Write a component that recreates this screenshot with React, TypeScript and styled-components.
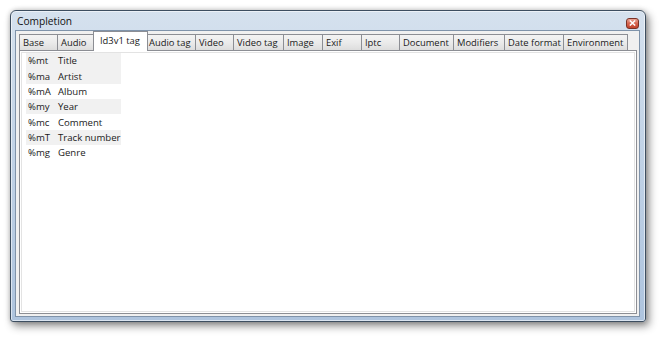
import React from 'react';
import styled, { createGlobalStyle } from 'styled-components';

const tabs: [string, number][] = [
	['Base', 39],
	['Audio', 39],
	['Id3v1 tag', 51],
	['Audio tag', 51],
	['Video', 39],
	['Video tag', 51],
	['Image', 40],
	['Exif', 40],
	['Iptc', 39],
	['Document', 55],
	['Modifiers', 52],
	['Date format', 60],
	['Environment', 65],
];

const fields: [string, string][] = [
	['%mt', 'Title'],
	['%ma', 'Artist'],
	['%mA', 'Album'],
	['%my', 'Year'],
	['%mc', 'Comment'],
	['%mT', 'Track number'],
	['%mg', 'Genre'],
];

export default function App() {
	const active = 2;
	return (
		<>
			<GlobalStyle />
			<Desktop>
				<Window>
					<TitleBar>
						<Title>Completion</Title>
						<CloseButton aria-label='Close'>
							<svg width='7' height='6' viewBox='0 0 7 6'>
								<path d='M0.8 0.5 L6.2 5.5 M6.2 0.5 L0.8 5.5' stroke='#fff' strokeWidth='1.5' />
							</svg>
						</CloseButton>
					</TitleBar>
					<Client>
						<TabStrip>
							{tabs.map(([t, w], i) => (
								<Tab key={t} $width={w} $active={i === active}>
									{t}
								</Tab>
							))}
						</TabStrip>
						<Panel>
							<List>
								{fields.map(([code, name], i) => (
									<Row key={code} $shaded={i === 0 || i % 2 === 1}>
										<Cell>{code}</Cell>
										<Cell>{name}</Cell>
									</Row>
								))}
							</List>
						</Panel>
					</Client>
				</Window>
			</Desktop>
		</>
	);
}

// Styled Components ...
const GlobalStyle = createGlobalStyle`
	html, body {
		margin: 0;
		padding: 0;
		background: #ffffff;
	}
	body {
		font-family: 'Open Sans', 'Noto Sans', sans-serif;
		font-size: 9.6px;
		color: #1a1a1a;
	}
`;

const Desktop = styled.div`
	width: 660px;
	height: 338px;
	box-sizing: border-box;
	padding: 10px 0 0 10px;
	background: #ffffff;
	overflow: hidden;
`;

const Window = styled.div`
	width: 636px;
	height: 312px;
	box-sizing: border-box;
	display: flex;
	flex-direction: column;
	border: 1px solid #3d4e60;
	border-radius: 6px 6px 3px 3px;
	background: linear-gradient(180deg, #d5e1ee 0%, #c3d4e7 40%, #aec4de 100%);
	box-shadow: 3px 4px 9px rgba(0, 0, 0, 0.45), 0 0 5px rgba(0, 0, 0, 0.2), inset 0 0 0 1px rgba(255, 255, 255, 0.55);
	padding: 0 5px 4px 4px;
`;

const TitleBar = styled.div`
	height: 19px;
	display: flex;
	align-items: center;
	justify-content: space-between;
	padding: 0 1px 0 2px;
`;

const Title = styled.span`
	font-size: 10.2px;
	color: #111;
	padding-top: 1px;
`;

const CloseButton = styled.div`
	width: 13px;
	height: 11px;
	box-sizing: border-box;
	margin-top: 5px;
	display: flex;
	align-items: center;
	justify-content: center;
	border: 1px solid #7a3226;
	border-radius: 3px;
	background: linear-gradient(180deg, #e9a394 0%, #d6654f 50%, #c2422b 100%);
`;

const Client = styled.div`
	flex: 1;
	display: flex;
	flex-direction: column;
	border: 1px solid #7f93aa;
	background: #f0f0f0;
	padding: 1px 2px 2px 3px;
	min-height: 0;
`;

const TabStrip = styled.div`
	display: flex;
	align-items: flex-end;
	height: 19px;
	position: relative;
	z-index: 1;
	margin-bottom: -1px;
	font-size: 9.4px;
`;

const Tab = styled.div<{ $active: boolean; $width: number }>`
	box-sizing: border-box;
	flex: none;
	width: ${(p) => (p.$active ? p.$width + 4 : p.$width)}px;
	height: ${(p) => (p.$active ? '20px' : '17px')};
	padding: ${(p) => (p.$active ? '0 0 2px 6px' : '0 0 1px 3px')};
	margin: ${(p) => (p.$active ? '0 -2px 0 -3px' : '0 0 0 -1px')};
	display: flex;
	align-items: center;
	justify-content: flex-start;
	white-space: nowrap;
	overflow: hidden;
	border: 1px solid #8c8e94;
	border-bottom: ${(p) => (p.$active ? 'none' : '1px solid #8c8e94')};
	background: ${(p) =>
		p.$active ? '#ffffff' : 'linear-gradient(180deg, #f3f3f3 0%, #ebebeb 50%, #dddddd 100%)'};
	position: relative;
	z-index: ${(p) => (p.$active ? 2 : 1)};
	&:first-child {
		margin-left: 0;
	}
`;

const Panel = styled.div`
	flex: 1;
	border: 1px solid #8c8e94;
	background: #ffffff;
	padding: 1px;
	min-height: 0;
	display: flex;
`;

const List = styled.div`
	flex: 1;
	border: 1px solid #e3e3e3;
	padding: 0 4px;
`;

const Row = styled.div<{ $shaded: boolean }>`
	display: grid;
	grid-template-columns: 30px 65px;
	width: 95px;
	height: 15.35px;
	align-items: center;
	background: ${(p) => (p.$shaded ? '#f1f1f1' : 'transparent')};
`;

const Cell = styled.span`
	padding-left: 2px;
	white-space: nowrap;
`;
